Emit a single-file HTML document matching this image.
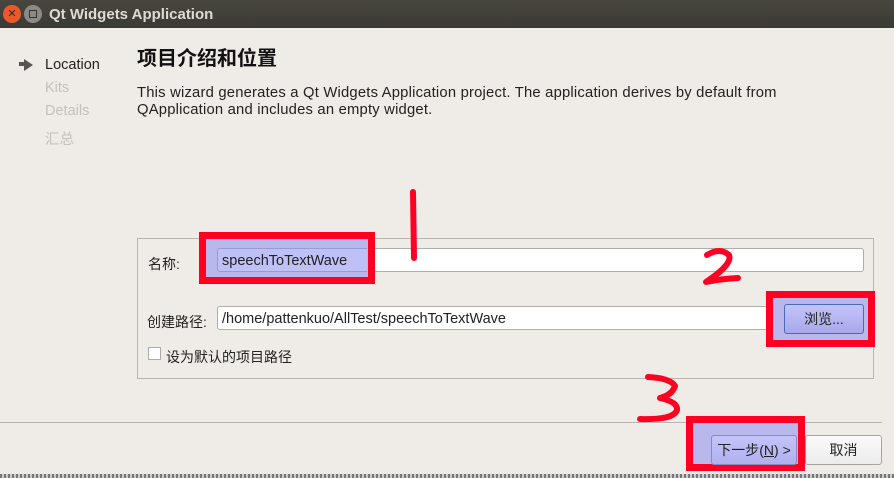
<!DOCTYPE html>
<html><head><meta charset="utf-8"><style>
*{box-sizing:border-box;margin:0;padding:0}
body{width:894px;height:478px;background:#efebe7;font-family:"Liberation Sans","Noto Sans CJK SC",sans-serif;font-size:14px;color:#222;position:relative;overflow:hidden}
.a{position:absolute}
.tb{left:0;top:0;width:894px;height:28px;background:linear-gradient(#48473f,#3a3935);}
.inp{background:#fff;border:1px solid #b0aca8;border-radius:3px;height:24px;padding-left:4px;line-height:24px;font-size:14.5px}
.btn{border:1px solid #a8a4a0;border-radius:3px;background:linear-gradient(#fafafa,#ececec);text-align:center;line-height:28px;font-size:14px}
.red{border:7px solid #ff0022;background:#b8b8ec}
</style></head><body>
<div class="a tb"></div>
<div class="a" style="left:3px;top:5px;width:18px;height:18px;border-radius:50%;background:#e9592b;color:#3a2a20;font-size:11px;text-align:center;line-height:18px">✕</div>
<div class="a" style="left:24px;top:5px;width:18px;height:18px;border-radius:50%;background:#8c8a84"><div style="margin:5px;width:8px;height:8px;border:1px solid #333"></div></div>
<div class="a" style="left:49px;top:6px;color:#dfdbd2;font-size:15px;font-weight:bold">Qt Widgets Application</div>

<div class="a" style="left:24px;top:59px;width:0;height:0;border-left:9px solid #555;border-top:6px solid transparent;border-bottom:6px solid transparent"></div>
<div class="a" style="left:19px;top:62px;width:7px;height:4px;background:#555"></div>
<div class="a" style="left:45px;top:57px;font-size:14.5px;color:#222">Location</div>
<div class="a" style="left:45px;top:80px;color:#c4c0bb;font-size:14.5px">Kits</div>
<div class="a" style="left:45px;top:103px;color:#c4c0bb;font-size:14.5px">Details</div>
<div class="a" style="left:45px;top:128px;color:#c4c0bb;font-size:14.5px">汇总</div>

<div class="a" style="left:137px;top:42px;font-size:20px;font-weight:bold;color:#111">项目介绍和位置</div>
<div class="a" style="left:137px;top:85px;font-size:14.8px;line-height:17px;color:#222;letter-spacing:0.2px">This wizard generates a Qt Widgets Application project. The application derives by default from<br>QApplication and includes an empty widget.</div>

<div class="a" style="left:137px;top:238px;width:737px;height:141px;border:1px solid #b8b4b0"></div>
<div class="a" style="left:148px;top:254px">名称:</div>
<div class="a inp" style="left:217px;top:248px;width:647px"></div>
<div class="a red" style="left:199px;top:232px;width:176px;height:52px"></div>
<div class="a inp" style="left:217px;top:248px;width:150px;background:#c0c0f8;border-color:#9a9ad0;border-right:none;border-radius:3px 0 0 3px">speechToTextWave</div>

<div class="a" style="left:147px;top:312px">创建路径:</div>
<div class="a inp" style="left:217px;top:306px;width:560px">/home/pattenkuo/AllTest/speechToTextWave</div>
<div class="a red" style="left:766px;top:291px;width:109px;height:56px"></div>
<div class="a btn" style="left:784px;top:304px;width:80px;height:30px;background:linear-gradient(#c4c4fa,#a8a8ea);border-color:#4a6ab8">浏览...</div>

<div class="a" style="left:148px;top:347px;width:13px;height:13px;border:1px solid #aaa;background:#fff"></div>
<div class="a" style="left:166px;top:347px">设为默认的项目路径</div>

<div class="a" style="left:0;top:422px;width:882px;height:1px;background:#b8b4b0"></div>
<div class="a red" style="left:686px;top:416px;width:119px;height:55px"></div>
<div class="a btn" style="left:711px;top:435px;width:86px;height:30px;background:linear-gradient(#c4c4fa,#b0b0ee);border-color:#8a8ac0">下一步(<u>N</u>) &gt;</div>
<div class="a btn" style="left:805px;top:435px;width:77px;height:30px">取消</div>
<div class="a" style="left:0;top:474px;width:894px;height:4px;background:repeating-linear-gradient(90deg,#777 0 2px,#ccc 2px 4px)"></div>

<svg class="a" style="left:0;top:0" width="894" height="478" fill="none" stroke="#ff0022" stroke-width="6" stroke-linecap="round" stroke-linejoin="round">
<path d="M413 192 L414 258"/>
<path d="M707 255 Q720 247 729 255 Q733 264 706 282 Q720 279 738 278"/>
<path d="M648 377 Q670 378 675 386 Q672 395 660 398 Q678 402 677 410 Q674 420 640 419"/>
</svg>
</body></html>
